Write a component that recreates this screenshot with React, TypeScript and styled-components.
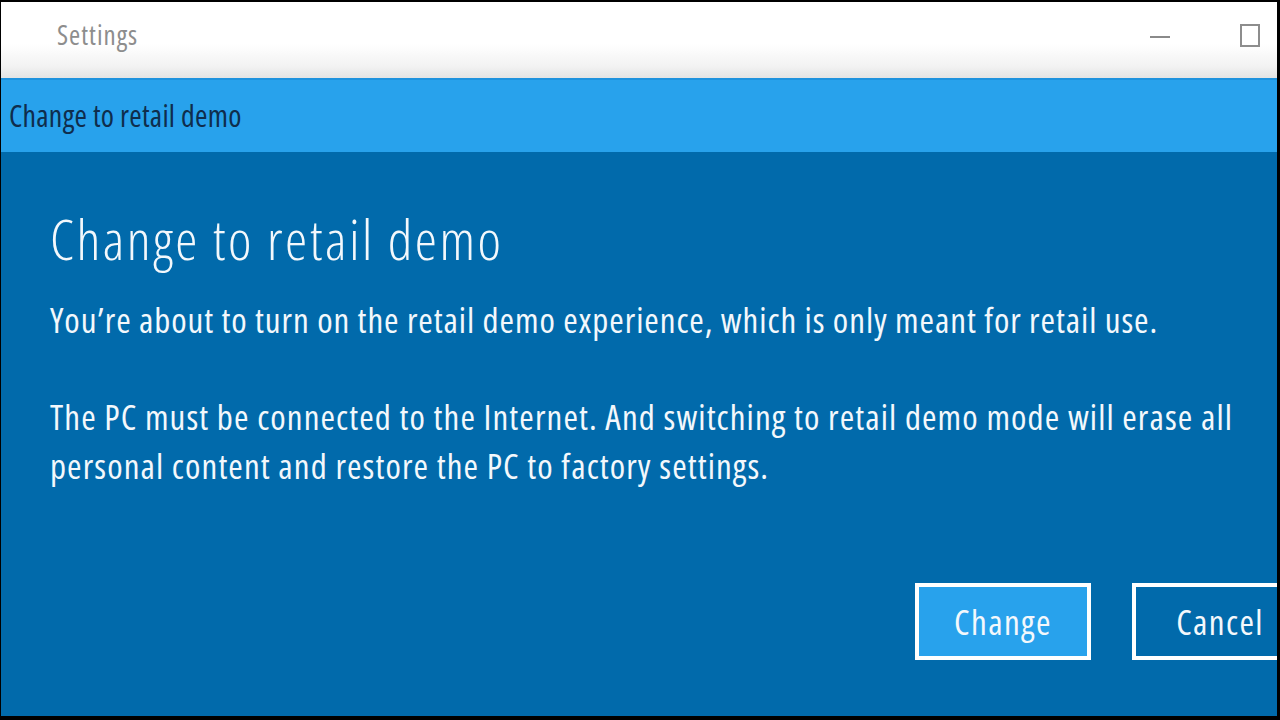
import React from "react";
import styled, { createGlobalStyle } from "styled-components";

const GlobalStyle = createGlobalStyle`
  html, body { margin: 0; padding: 0; background: #000; }
  body { font-family: "Open Sans", "Noto Sans", sans-serif; }
  * { box-sizing: border-box; }
`;

const Frame = styled.div`
  width: 1280px;
  height: 720px;
  background: #000;
  padding: 2px 3px 4px 1px;
  display: flex;
  flex-direction: column;
  overflow: hidden;
`;

const TitleBar = styled.div`
  height: 76px;
  flex: none;
  display: flex;
  align-items: flex-start;
  justify-content: space-between;
  background: linear-gradient(#ffffff 0%, #ffffff 55%, #f2f2f2 85%, #e4e4e4 100%);
  padding: 18px 17px 0 56px;
`;

const AppName = styled.div`
  font-family: "Open Sans", sans-serif;
  font-stretch: 75%;
  font-size: 27px;
  line-height: 30px;
  letter-spacing: 1px;
  color: #8d8d8d;
`;

const Controls = styled.div`
  display: flex;
  align-items: flex-start;
  gap: 70px;
`;

const Minimize = styled.div`
  width: 20px;
  height: 2px;
  margin-top: 16px;
  background: #8a8a8a;
`;

const Maximize = styled.div`
  width: 20px;
  height: 23px;
  margin-top: 4px;
  border: 2px solid #8d8d8d;
`;

const Band = styled.div`
  height: 74px;
  flex: none;
  background: #28a2ec;
  border-top: 2px solid #1f93de;
  padding: 18px 0 0 8px;
`;

const BandTitle = styled.div`
  font-family: "Open Sans", sans-serif;
  font-stretch: 75%;
  font-size: 30px;
  line-height: 36px;
  letter-spacing: 0.25px;
  color: #0f2d4c;
`;

const Body = styled.div`
  flex: 1;
  background: #016aab;
  padding: 54px 0 0 49px;
  display: flex;
  flex-direction: column;
  overflow: hidden;
  color: #f3f8fc;
`;

const Heading = styled.h1`
  margin: 0;
  font-family: "Open Sans", sans-serif;
  font-stretch: 75%;
  font-weight: 300;
  font-size: 56px;
  line-height: 64px;
  letter-spacing: 2.5px;
`;

const Paragraph = styled.p<{ $gap: number; $spacing: number }>`
  margin: ${(p) => p.$gap}px 0 0 0;
  font-family: "Open Sans", sans-serif;
  font-stretch: 75%;
  font-weight: 400;
  font-size: 35px;
  line-height: 49px;
  letter-spacing: ${(p) => p.$spacing}px;
  white-space: nowrap;
`;

const ButtonRow = styled.div`
  margin-top: 93px;
  display: flex;
  justify-content: flex-end;
  gap: 41px;
  margin-right: -31px;
`;

const Button = styled.button<{ $primary?: boolean }>`
  width: 176px;
  height: 77px;
  flex: none;
  border: 4px solid #ffffff;
  background: ${(p) => (p.$primary ? "#28a2ec" : "#016aab")};
  color: #f3f8fc;
  font-family: "Open Sans", sans-serif;
  font-stretch: 75%;
  font-size: 35px;
  line-height: 40px;
  letter-spacing: 1.4px;
  padding: 0;
  display: flex;
  align-items: center;
  justify-content: center;
`;

export default function App() {
  return (
    <>
      <GlobalStyle />
      <Frame>
        <TitleBar>
          <AppName>Settings</AppName>
          <Controls>
            <Minimize />
            <Maximize />
          </Controls>
        </TitleBar>
        <Band>
          <BandTitle>Change to retail demo</BandTitle>
        </Band>
        <Body>
          <Heading>Change to retail demo</Heading>
          <Paragraph $gap={25} $spacing={0.93}>
            You’re about to turn on the retail demo experience, which is only meant for retail use.
          </Paragraph>
          <Paragraph $gap={48} $spacing={1.1}>
            The PC must be connected to the Internet. And switching to retail demo mode will erase all
            <br />
            personal content and restore the PC to factory settings.
          </Paragraph>
          <ButtonRow>
            <Button $primary>Change</Button>
            <Button>Cancel</Button>
          </ButtonRow>
        </Body>
      </Frame>
    </>
  );
}
